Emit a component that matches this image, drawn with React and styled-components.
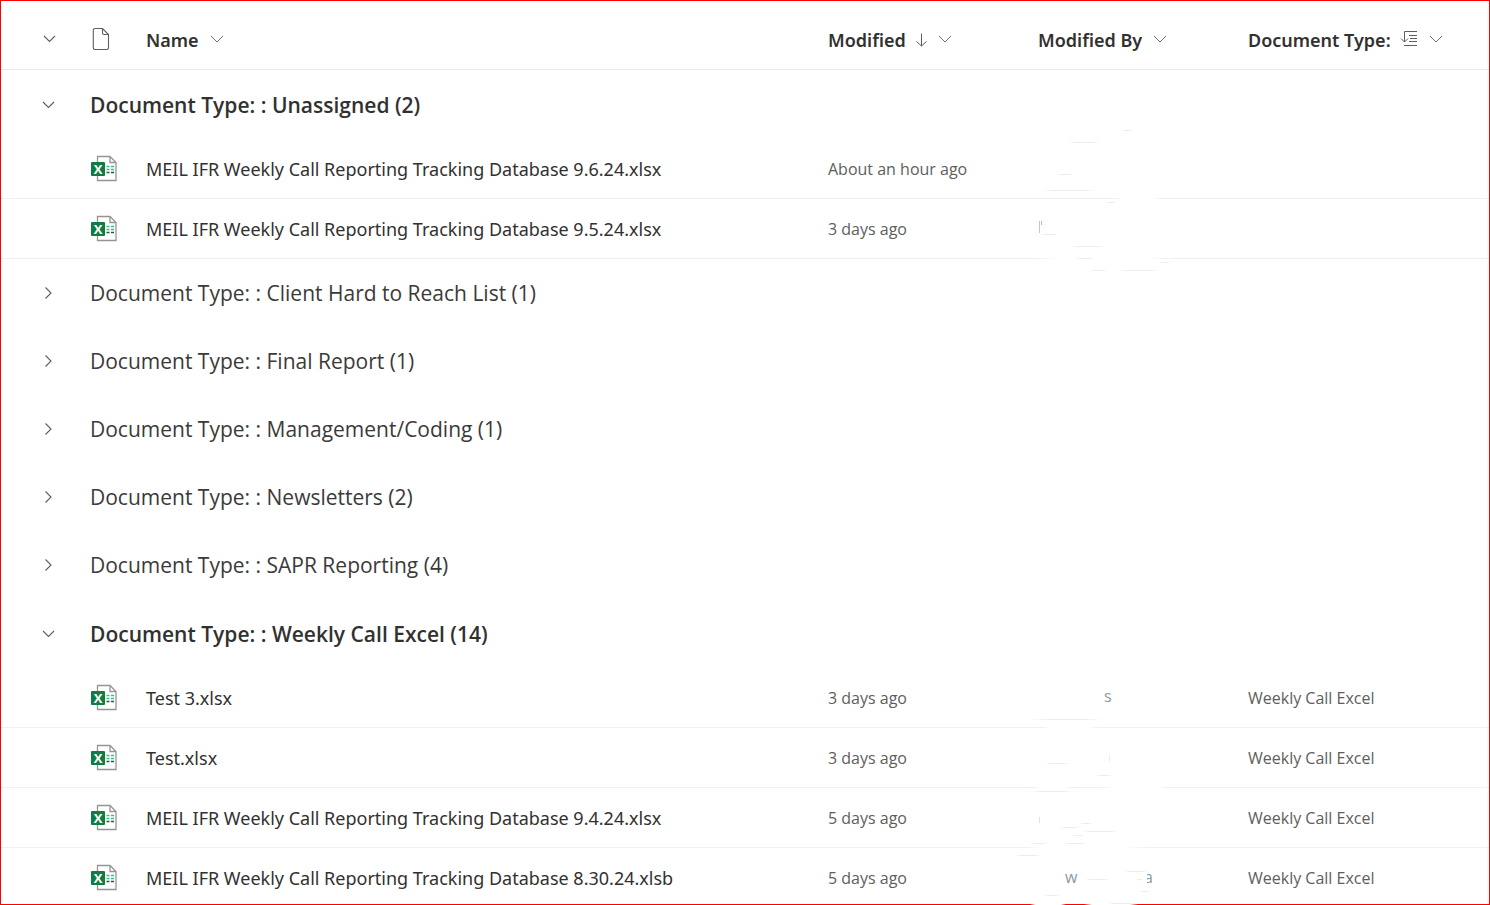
import React, { useState } from 'react'
import styled, { createGlobalStyle } from 'styled-components'

const GlobalStyle = createGlobalStyle`
  * {
    box-sizing: border-box;
  }

  body {
    margin: 0;
    background: #fff;
    color: #323130;
    font-family: 'Open Sans', 'Noto Sans', sans-serif;
    overflow: hidden;
  }
`

const Page = styled.div`
  position: relative;
  height: 100vh;
`

const Frame = styled.main`
  height: 100%;
  border: 1px solid #f00;
  overflow: hidden;
`

const Table = styled.table`
  width: 100%;
  table-layout: fixed;
  border-collapse: separate;
  border-spacing: 0;
`

const Col = styled.col`
  width: ${props => props.$width || 'auto'};
`

const HeaderCell = styled.th`
  height: 69px;
  padding: ${props => (props.$icon ? '8px' : '10px')} 0 0 ${props => props.$indent || '10px'};
  border-bottom: 1px solid #eaeaea;
  text-align: left;
  font-weight: 600;
`

const HeaderButton = styled.button`
  display: flex;
  align-items: center;
  gap: 9px;
  padding: 0;
  border: 0;
  background: none;
  color: inherit;
  font: inherit;
  font-family: 'Noto Sans', sans-serif;
  font-size: 18px;
  line-height: 24px;
  white-space: nowrap;
  cursor: pointer;
`

const GroupCell = styled.td`
  height: ${props => (props.$open ? '69px' : '68px')};
  padding: 0;
`

const GroupButton = styled.button`
  display: flex;
  align-items: center;
  gap: 34px;
  padding: 0 0 0 39px;
  border: 0;
  background: none;
  color: ${props => (props.$open ? '#323130' : '#3b3a39')};
  font: inherit;
  font-size: 21px;
  font-weight: ${props => (props.$open ? 600 : 400)};
  line-height: 28px;
  white-space: nowrap;
  cursor: pointer;
`

const Cell = styled.td`
  height: 60px;
  padding: 0 0 0 10px;
  border-bottom: 1px solid #f0f0f0;
  color: #605e5c;
  font-size: 16px;
  line-height: 24px;
  white-space: nowrap;

  svg {
    display: block;
  }
`

const NameCell = styled(Cell)`
  padding-top: 2px;
`

const FileLink = styled.a`
  color: #323130;
  font-family: 'Noto Sans', sans-serif;
  font-size: 18px;
  text-decoration: none;

  &:hover {
    text-decoration: underline;
  }
`

const Smudges = styled.svg`
  position: absolute;
  top: 120px;
  right: 300px;
  pointer-events: none;
`

const Chevron = ({ open = true, size = 16 }) => (
  <svg width={size} height={size} viewBox="0 0 16 16" fill="none" stroke="#605e5c" strokeWidth="1.1">
    <path d={open ? 'M3 5 L8.500 10.500 L14 5' : 'M5.500 2.500 L11 8 L5.500 13.500'} />
  </svg>
)

const MenuChevron = () => (
  <svg width="18" height="16" viewBox="0 0 18 16" fill="none" stroke="#716f6d" strokeWidth="1">
    <path d="M3 4 L9 10 L15 4" />
  </svg>
)

const FileIcon = () => (
  <svg width="22" height="24" viewBox="0 0 22 24" fill="none" stroke="#605e5c" strokeWidth="1.1">
    <path d="M5 1.500h7.500l6 6v13.300a1.700 1.700 0 0 1-1.700 1.700H5a1.700 1.700 0 0 1-1.700-1.700V3.200A1.700 1.700 0 0 1 5 1.500z" />
    <path d="M12.500 1.500v4.500a1.500 1.500 0 0 0 1.500 1.500h4.500" />
  </svg>
)

const SortDown = () => (
  <svg width="12" height="16" viewBox="0 0 12 16" fill="none" stroke="#605e5c" strokeWidth="1">
    <path d="M6.500 1.500v12.500M1.500 9.500l5 4.500 5-4.500" />
  </svg>
)

const GroupedIcon = () => (
  <svg width="18" height="18" viewBox="0 0 18 18" fill="none" stroke="#605e5c" strokeWidth="1">
    <path d="M17 .500H4.500V11M1 7.500l3.500 3.500L8 7.500" />
    <path d="M9 4.500h8M10 7.500h7M9 10.500h8M4 14.500h13" />
  </svg>
)

const ExcelIcon = () => (
  <svg width="28" height="28" viewBox="0 0 28 28">
    <path d="M7.500 1.500H20l6 6v18H7.500z" fill="#fff" stroke="#979593" strokeWidth="1.300" />
    <path d="M20 1.500v6h6" fill="none" stroke="#979593" strokeWidth="1.300" />
    <path d="M16.500 11.500h3M21 11.500h3M16.500 14.500h3M21 14.500h3" stroke="#33c481" strokeWidth="1.300" />
    <path d="M16.500 17.500h3M21 17.500h3" stroke="#185c37" strokeWidth="1.300" />
    <rect x="1" y="7" width="14" height="14" rx="1" fill="#107c41" />
    <text x="8" y="18.500" fill="#fff" fontFamily="Open Sans, sans-serif" fontSize="13" fontWeight="700" textAnchor="middle">X</text>
  </svg>
)

// x, y, width of the rule pieces that are wiped out
const wiped = [
  [106, 78, 44], [28, 138, 130], [32, 607, 55], [25, 667, 35],
  [92, 667, 66], [14, 727, 122], [20, 784, 36], [74, 784, 54]
]

// x, y, width of the strokes left behind
const leftovers = [
  [112, 10, 11], [58, 22, 32], [47, 54, 16], [31, 70, 56],
  [96, 82, 10], [30, 114, 18], [61, 126, 34], [66, 138, 18], [150, 142, 10],
  [81, 150, 16], [108, 150, 42], [20, 599, 72], [35, 643, 24], [86, 655, 16],
  [20, 671, 44], [70, 703, 12], [50, 707, 20], [72, 711, 36], [62, 715, 12],
  [20, 723, 18], [53, 723, 24], [4, 735, 28], [114, 751, 24], [75, 759, 25],
  [125, 759, 15], [130, 771, 10], [34, 775, 16], [98, 783, 28]
]

const NameSmudges = () => (
  <Smudges width="180" height="785" viewBox="0 0 180 785" aria-hidden="true">
    <defs>
      <linearGradient id="wipe">
        <stop offset="0" stopColor="#fff" stopOpacity="0" />
        <stop offset=".15" stopColor="#fff" />
        <stop offset=".85" stopColor="#fff" />
        <stop offset="1" stopColor="#fff" stopOpacity="0" />
      </linearGradient>
      <linearGradient id="trace">
        <stop offset="0" stopColor="#ececec" stopOpacity="0" />
        <stop offset=".25" stopColor="#ececec" />
        <stop offset=".75" stopColor="#ececec" />
        <stop offset="1" stopColor="#ececec" stopOpacity="0" />
      </linearGradient>
    </defs>
    {wiped.map(([x, y, width]) => (
      <rect key={`${x}-${y}`} x={x} y={y} width={width} height="1" fill="url(#wipe)" />
    ))}
    {leftovers.map(([x, y, width]) => (
      <rect key={`${x}-${y}`} x={x} y={y} width={width} height="1" fill="url(#trace)" />
    ))}
    <path d="M29.500 101v12" stroke="#c8c4c8" />
    <path d="M31.500 101v4" stroke="#b4bccb" />
    <path d="M29.500 697v6" stroke="#e4e0da" />
    <path d="M99.500 634v8" stroke="#eee" />
    <g fill="#8a9aa5" fontFamily="Open Sans, sans-serif" fontSize="16">
      <text x="94" y="582">s</text>
      <text x="55" y="763">w</text>
      <text x="134" y="763">a</text>
    </g>
    <rect x="132" y="752" width="5" height="13" fill="#fff" />
  </Smudges>
)

const groups = [
  {
    title: 'Unassigned',
    count: 2,
    files: [
      { name: 'MEIL IFR Weekly Call Reporting Tracking Database 9.6.24.xlsx', modified: 'About an hour ago' },
      { name: 'MEIL IFR Weekly Call Reporting Tracking Database 9.5.24.xlsx', modified: '3 days ago' }
    ]
  },
  { title: 'Client Hard to Reach List', count: 1 },
  { title: 'Final Report', count: 1 },
  { title: 'Management/Coding', count: 1 },
  { title: 'Newsletters', count: 2 },
  { title: 'SAPR Reporting', count: 4 },
  {
    title: 'Weekly Call Excel',
    count: 14,
    files: [
      { name: 'Test 3.xlsx', modified: '3 days ago', type: 'Weekly Call Excel' },
      { name: 'Test.xlsx', modified: '3 days ago', type: 'Weekly Call Excel' },
      { name: 'MEIL IFR Weekly Call Reporting Tracking Database 9.4.24.xlsx', modified: '5 days ago', type: 'Weekly Call Excel' },
      { name: 'MEIL IFR Weekly Call Reporting Tracking Database 8.30.24.xlsb', modified: '5 days ago', type: 'Weekly Call Excel' }
    ]
  }
]

const FileRow = ({ file }) => (
  <tr>
    <Cell />
    <Cell><ExcelIcon /></Cell>
    <NameCell><FileLink href="#file">{file.name}</FileLink></NameCell>
    <Cell>{file.modified}</Cell>
    <Cell />
    <Cell>{file.type}</Cell>
  </tr>
)

const Group = ({ group }) => {
  const [open, setOpen] = useState(Boolean(group.files))
  return (
    <tbody>
      <tr>
        <GroupCell colSpan={6} $open={open}>
          <GroupButton $open={open} aria-expanded={open} onClick={() => setOpen(!open)}>
            <Chevron open={open} />
            {`Document Type: : ${group.title} (${group.count})`}
          </GroupButton>
        </GroupCell>
      </tr>
      {open && group.files && group.files.map(file => <FileRow key={file.name} file={file} />)}
    </tbody>
  )
}

export default function App() {
  return (
    <Page>
      <GlobalStyle />
      <Frame>
        <Table>
          <colgroup>
            <Col $width="79px" />
            <Col $width="56px" />
            <Col />
            <Col $width="210px" />
            <Col $width="210px" />
            <Col $width="251px" />
          </colgroup>
          <thead>
            <tr>
              <HeaderCell $icon $indent="40px">
                <HeaderButton aria-label="Toggle all groups"><Chevron /></HeaderButton>
              </HeaderCell>
              <HeaderCell $icon>
                <HeaderButton aria-label="File type"><FileIcon /></HeaderButton>
              </HeaderCell>
              <HeaderCell><HeaderButton>Name <MenuChevron /></HeaderButton></HeaderCell>
              <HeaderCell><HeaderButton>Modified <SortDown /> <MenuChevron /></HeaderButton></HeaderCell>
              <HeaderCell><HeaderButton>Modified By <MenuChevron /></HeaderButton></HeaderCell>
              <HeaderCell><HeaderButton>Document Type: <GroupedIcon /> <MenuChevron /></HeaderButton></HeaderCell>
            </tr>
          </thead>
          {groups.map(group => <Group key={group.title} group={group} />)}
        </Table>
      </Frame>
      <NameSmudges />
    </Page>
  )
}
